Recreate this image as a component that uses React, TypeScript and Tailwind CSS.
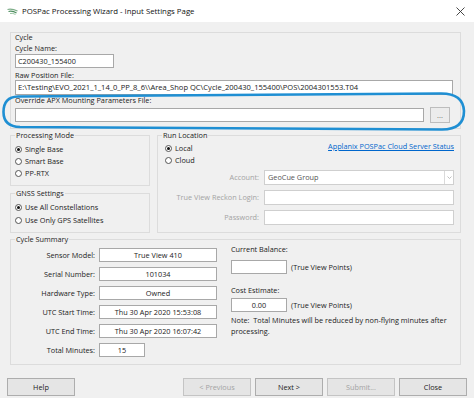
import React from 'react'

// ── Small building blocks ─────────────────────────────────────────────────────

function Radio({ label, checked = false }: { label: string; checked?: boolean }) {
  return (
    <div className="flex h-[12px] items-center gap-[3px]">
      <span className="flex h-[7px] w-[7px] items-center justify-center rounded-full border border-[#555] bg-white">
        {checked && <span className="h-[3px] w-[3px] rounded-full bg-[#111]" />}
      </span>
      <span>{label}</span>
    </div>
  )
}

function Box({ value = '', className = '', center = false }: { value?: string; className?: string; center?: boolean }) {
  return (
    <div
      className={`flex items-center overflow-hidden whitespace-nowrap border border-[#a8a8a8] bg-white px-[2px] ${
        center ? 'justify-center' : ''
      } ${className}`}
    >
      {value}
    </div>
  )
}

function Button({ label, disabled = false, className = '' }: { label: string; disabled?: boolean; className?: string }) {
  return (
    <button
      type="button"
      className={`flex h-[18px] w-[68px] items-center justify-center border bg-[#e5e5e5] ${
        disabled ? 'border-[#c4c4c4] text-[#a3a3a3]' : 'border-[#adadad] text-[#222]'
      } ${className}`}
    >
      {label}
    </button>
  )
}

// ── Data ──────────────────────────────────────────────────────────────────────

const SUMMARY = [
  { label: 'Sensor Model:', value: 'True View 410', w: 'w-[118px]' },
  { label: 'Serial Number:', value: '101034', w: 'w-[118px]' },
  { label: 'Hardware Type:', value: 'Owned', w: 'w-[118px]' },
  { label: 'UTC Start Time:', value: 'Thu 30 Apr 2020 15:53:08', w: 'w-[118px]' },
  { label: 'UTC End Time:', value: 'Thu 30 Apr 2020 16:07:42', w: 'w-[118px]' },
  { label: 'Total Minutes:', value: '15', w: 'w-[46px]' },
]

// ── Page ──────────────────────────────────────────────────────────────────────

export default function App() {
  return (
    <div className="relative h-[401px] w-[474px] overflow-hidden bg-white font-['Open_Sans',sans-serif] text-[7.3px] leading-[9px] text-[#222]">
      {/* ── Title bar ───────────────────────────────────────────────── */}
      <div className="flex h-[22px] items-center pl-[7px] pr-[9px]">
        <svg width="11" height="7" viewBox="0 0 11 7" className="shrink-0">
          <path d="M0.5 1.5 Q5 0.5 10.5 3" stroke="#7fae8a" strokeWidth="1.2" fill="none" />
          <path d="M1.5 3.5 Q5.5 2.5 9.5 5" stroke="#4f8f60" strokeWidth="1.2" fill="none" />
          <path d="M3 5.5 Q6 4.8 8.5 6.5" stroke="#9cc6a4" strokeWidth="1" fill="none" />
        </svg>
        <span className="ml-[4px] text-[7.8px] text-[#111]">POSPac Processing Wizard - Input Settings Page</span>
        <svg width="9" height="9" viewBox="0 0 9 9" className="ml-auto">
          <path d="M0.5 0.5 L8.5 8.5 M8.5 0.5 L0.5 8.5" stroke="#333" strokeWidth="0.9" />
        </svg>
      </div>

      {/* ── Dialog body ─────────────────────────────────────────────── */}
      <div className="h-[376px] bg-[#f0f0f0] px-[7px] pt-[10px]">
        <div className="pl-[3px] pr-[6px]">
          {/* Cycle */}
          <div className="h-[97px] border border-[#dcdcdc] px-[4px]">
            <div className="h-[9px]">Cycle</div>
            <div className="mt-[2px] h-[9px]">Cycle Name:</div>
            <Box value="C200430_155400" className="mt-[1px] h-[14px] w-[99px]" />
            <div className="mt-[3px] h-[9px]">Raw Position File:</div>
            <Box
              value="E:\Testing\EVO_2021_1_14_0_PP_8_6\\Area_Shop QC\Cycle_200430_155400\POS\2004301553.T04"
              className="h-[15px] w-[438px] text-[7.55px]"
            />
            <div className="mt-[1px] h-[9px]">Override APX Mounting Parameters File:</div>
            <div className="mt-[2px] flex h-[16px] items-center gap-[6px]">
              <Box className="h-[14px] w-[409px]" />
              <div className="flex h-[16px] w-[20px] items-center justify-center border border-[#bdbdbd] bg-[#ececec] text-[#666]">
                ...
              </div>
            </div>
          </div>

          {/* Processing / GNSS / Run location */}
          <div className="mt-[2px] flex gap-[7px]">
            <div className="flex w-[140px] flex-col">
              <fieldset className="h-[55px] border border-[#dcdcdc] px-[4px]">
                <legend className="h-[9px] px-[1px]">Processing Mode</legend>
                <div className="mt-[3px]">
                  <Radio label="Single Base" checked />
                  <Radio label="Smart Base" />
                  <Radio label="PP-RTX" />
                </div>
              </fieldset>
              <fieldset className="mt-[3px] h-[44px] border border-[#dcdcdc] px-[4px]">
                <legend className="h-[9px] px-[1px]">GNSS Settings</legend>
                <div className="mt-[3px] flex flex-col">
                  <div className="h-[13px]">
                    <Radio label="Use All Constellations" checked />
                  </div>
                  <div className="h-[13px]">
                    <Radio label="Use Only GPS Satellites" />
                  </div>
                </div>
              </fieldset>
            </div>

            <fieldset className="h-[102px] w-[304px] border border-[#dcdcdc] px-[4px]">
              <legend className="h-[9px] px-[1px]">Run Location</legend>
              <div className="mt-[2px] flex items-start justify-between">
                <div className="pl-[3px]">
                  <Radio label="Local" checked />
                  <Radio label="Cloud" />
                </div>
                <a className="mr-[2px] h-[8px] leading-[8px] text-[#0066cc] underline">
                  Applanix POSPac Cloud Server Status
                </a>
              </div>
              <div className="mt-[4px] grid grid-cols-[97px_190px] gap-x-[5px] gap-y-[5px] text-[#a3a3a3]">
                <div className="flex h-[15px] items-center justify-end">Account:</div>
                <div className="flex h-[15px] items-stretch border border-[#cfcfcf] bg-white">
                  <span className="flex flex-1 items-center pl-[3px] text-[#555]">GeoCue Group</span>
                  <span className="flex w-[9px] items-center justify-center border-l border-[#dadada]">
                    <svg width="5" height="3" viewBox="0 0 5 3">
                      <path d="M0.5 0.5 L2.5 2.5 L4.5 0.5" stroke="#b0b0b0" strokeWidth="0.8" fill="none" />
                    </svg>
                  </span>
                </div>
                <div className="flex h-[15px] items-center justify-end">True View Reckon Login:</div>
                <div className="h-[15px] border border-[#cfcfcf] bg-white" />
                <div className="flex h-[15px] items-center justify-end">Password:</div>
                <div className="h-[15px] border border-[#cfcfcf] bg-white" />
              </div>
            </fieldset>
          </div>

          {/* Cycle Summary */}
          <fieldset className="mt-[2px] h-[130px] border border-[#dcdcdc] px-[4px]">
            <legend className="h-[9px] px-[1px]">Cycle Summary</legend>
            <div className="flex">
              <div className="grid grid-cols-[80px_auto] gap-x-[4px] gap-y-[5px] pt-[4px]">
                {SUMMARY.map(r => (
                  <React.Fragment key={r.label}>
                    <div className="flex h-[14px] items-center justify-end">{r.label}</div>
                    <Box value={r.value} center className={`h-[14px] ${r.w}`} />
                  </React.Fragment>
                ))}
              </div>
              <div className="ml-[14px] pt-[1px]">
                <div className="h-[9px]">Current Balance:</div>
                <div className="mt-[6px] flex h-[14px] items-center gap-[4px]">
                  <Box className="h-[14px] w-[56px]" />
                  <span>(True View Points)</span>
                </div>
                <div className="mt-[12px] h-[9px]">Cost Estimate:</div>
                <div className="mt-[3px] flex h-[14px] items-center gap-[4px]">
                  <Box value="0.00" center className="h-[14px] w-[56px]" />
                  <span>(True View Points)</span>
                </div>
                <p className="mt-[3px] whitespace-pre leading-[11px]">
                  {'Note:  Total Minutes will be reduced by non-flying minutes after\nprocessing.'}
                </p>
              </div>
            </div>
          </fieldset>
        </div>

        {/* Buttons */}
        <div className="mt-[13px] flex items-center">
          <Button label="Help" />
          <div className="ml-auto flex gap-[4px]">
            <Button label="< Previous" disabled />
            <Button label="Next >" />
            <Button label="Submit..." disabled />
            <Button label="Close" />
          </div>
        </div>
      </div>

      {/* Blue hand-drawn highlight around the override field */}
      <svg className="pointer-events-none absolute left-0 top-0" width="474" height="401" viewBox="0 0 474 401">
        <path
          d="M18 96.5 Q230 95 440 93.5 Q463 93 464 111 Q464 129.5 442 129.5 Q230 128 20 127 Q3.5 126.5 3.5 112 Q3.5 97 18 96.5 Z"
          stroke="#1f8fd3"
          strokeWidth="2.6"
          fill="none"
        />
      </svg>
    </div>
  )
}
